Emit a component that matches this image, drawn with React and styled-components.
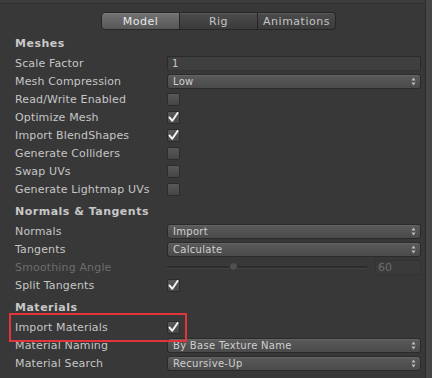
import React from 'react';
import styled, { createGlobalStyle } from 'styled-components';

const GlobalStyle = createGlobalStyle`
    html, body {
        margin: 0;
        padding: 0;
        background: #383838;
        font-family: "DejaVu Sans", Verdana, sans-serif;
    }
`;

const Window = styled.div`
    width: 432px;
    height: 378px;
    display: flex;
    overflow: hidden;
    background: #383838;
`;

const Panel = styled.div`
    position: relative;
    width: 425px;
    display: flex;
    flex-direction: column;
    border-right: 1px solid #2b2b2b;
`;

const Strip = styled.div`
    flex: 1;
    background: #464646;
`;

const TopBand = styled.div`
    height: 3px;
    background: #3d3d3d;
    border-bottom: 1px solid #2e2e2e;
`;

const TabBar = styled.div`
    display: flex;
    justify-content: flex-start;
    padding: 8px 0 0 101px;
`;

const Tab = styled.div`
    width: 77px;
    height: 16px;
    display: flex;
    align-items: center;
    justify-content: center;
    font-size: 11px;
    letter-spacing: 0.5px;
    color: ${(p) => (p.$active ? '#e8e8e8' : '#c4c4c4')};
    background: ${(p) =>
        p.$active
            ? 'linear-gradient(#727272, #575757)'
            : 'linear-gradient(#4c4c4c, #3b3b3b)'};
    border: 1px solid #262626;
    border-left-width: ${(p) => (p.$first ? '1px' : '0')};
    border-radius: ${(p) => (p.$first ? '4px 0 0 4px' : p.$last ? '0 4px 4px 0' : '0')};
    box-shadow: inset 0 1px 0 rgba(255, 255, 255, 0.08);
`;

const Body = styled.div`
    display: flex;
    flex-direction: column;
    padding: 0 4px 0 15px;
`;

const Header = styled.div`
    height: 24px;
    display: flex;
    align-items: flex-end;
    padding-bottom: 4px;
    box-sizing: border-box;
    font-size: 11px;
    font-weight: bold;
    letter-spacing: 0.5px;
    color: #c8c8c8;
`;

const Row = styled.div`
    height: 18px;
    display: grid;
    grid-template-columns: 152px 1fr;
    align-items: center;
`;

const Label = styled.div`
    font-size: 11px;
    letter-spacing: 0.15px;
    color: ${(p) => (p.$dim ? '#6c6c6c' : '#c6c6c6')};
    white-space: nowrap;
`;

const TextField = styled.div`
    height: 15px;
    box-sizing: border-box;
    background: #3f3f3f;
    border: 1px solid #2a2a2a;
    border-bottom-color: #353535;
    border-radius: 2px;
    padding-left: 4px;
    display: flex;
    align-items: center;
    font-size: 10px;
    color: #c8c8c8;
`;

const Dropdown = styled.div`
    height: 15px;
    box-sizing: border-box;
    background: linear-gradient(#5a5a5a, #4a4a4a);
    border: 1px solid #2a2a2a;
    border-radius: 3px;
    padding: 0 4px 0 5px;
    display: flex;
    align-items: center;
    justify-content: space-between;
    font-size: 10px;
    letter-spacing: 0.3px;
    color: #cfcfcf;
    box-shadow: inset 0 1px 0 rgba(255, 255, 255, 0.07);
`;

const Box = styled.div`
    width: 13px;
    height: 13px;
    box-sizing: border-box;
    background: linear-gradient(#585858, #464646);
    border: 1px solid #2c2c2c;
    border-radius: 2px;
    display: flex;
    align-items: center;
    justify-content: center;
`;

const SliderRow = styled.div`
    display: flex;
    align-items: center;
    gap: 8px;
`;

const Track = styled.div`
    position: relative;
    flex: 1;
    height: 2px;
    background: #2c2c2c;
    border-bottom: 1px solid #444;
`;

const Thumb = styled.div`
    position: absolute;
    left: 62px;
    top: -4px;
    width: 9px;
    height: 9px;
    border-radius: 50%;
    background: #505050;
    border: 1px solid #333;
    box-sizing: border-box;
`;

const NumberField = styled.div`
    width: 46px;
    height: 15px;
    box-sizing: border-box;
    background: #3a3a3a;
    border: 1px solid #333;
    padding-left: 2px;
    display: flex;
    align-items: center;
    font-size: 11px;
    color: #6c6c6c;
`;

const Highlight = styled.div`
    position: absolute;
    left: 9px;
    top: 313px;
    width: 178px;
    height: 29px;
    box-sizing: border-box;
    border: 2px solid #e2343a;
`;

const Check = () => (
    <svg width="11" height="11" viewBox="0 0 11 11">
        <path d="M1.5 5.5 L4.3 8.8 L9.6 1" fill="none" stroke="#f2f2f2" strokeWidth="2" strokeLinecap="round" strokeLinejoin="round" />
    </svg>
);

const Arrows = () => (
    <svg width="5" height="9" viewBox="0 0 5 9">
        <path d="M2.5 0.5 L4.5 3.5 L0.5 3.5 Z M2.5 8.5 L4.5 5.5 L0.5 5.5 Z" fill="#bdbdbd" />
    </svg>
);

function Checkbox({ checked }) {
    return <Box>{checked && <Check />}</Box>;
}

function Select({ value }) {
    return (
        <Dropdown>
            <span>{value}</span>
            <Arrows />
        </Dropdown>
    );
}

function Field({ label, children, dim }) {
    return (
        <Row>
            <Label $dim={dim}>{label}</Label>
            <div>{children}</div>
        </Row>
    );
}

export default function App() {
    return (
        <Window>
            <GlobalStyle />
            <Panel>
                <TopBand />
                <TabBar>
                    <Tab $active $first>Model</Tab>
                    <Tab>Rig</Tab>
                    <Tab $last>Animations</Tab>
                </TabBar>
                <Body>
                    <Header>Meshes</Header>
                    <Field label="Scale Factor"><TextField>1</TextField></Field>
                    <Field label="Mesh Compression"><Select value="Low" /></Field>
                    <Field label="Read/Write Enabled"><Checkbox /></Field>
                    <Field label="Optimize Mesh"><Checkbox checked /></Field>
                    <Field label="Import BlendShapes"><Checkbox checked /></Field>
                    <Field label="Generate Colliders"><Checkbox /></Field>
                    <Field label="Swap UVs"><Checkbox /></Field>
                    <Field label="Generate Lightmap UVs"><Checkbox /></Field>

                    <Header>Normals &amp; Tangents</Header>
                    <Field label="Normals"><Select value="Import" /></Field>
                    <Field label="Tangents"><Select value="Calculate" /></Field>
                    <Field label="Smoothing Angle" dim>
                        <SliderRow>
                            <Track><Thumb /></Track>
                            <NumberField>60</NumberField>
                        </SliderRow>
                    </Field>
                    <Field label="Split Tangents"><Checkbox checked /></Field>

                    <Header>Materials</Header>
                    <Field label="Import Materials"><Checkbox checked /></Field>
                    <Field label="Material Naming"><Select value="By Base Texture Name" /></Field>
                    <Field label="Material Search"><Select value="Recursive-Up" /></Field>
                </Body>
                <Highlight />
            </Panel>
            <Strip />
        </Window>
    );
}
